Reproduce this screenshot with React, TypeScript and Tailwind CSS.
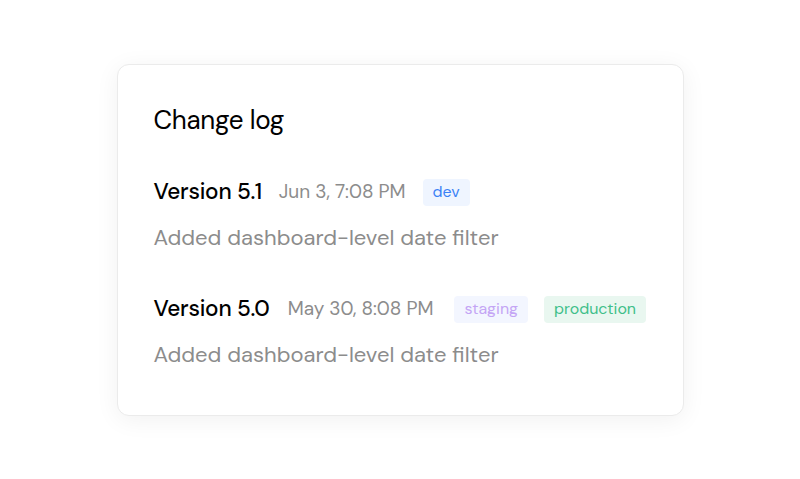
import React from "react";

const font = { fontFamily: '"DM Sans", Inter, "Noto Sans", sans-serif' };

function Badge({ label, cls }: { label: string; cls: string }) {
  return (
    <span className={`inline-flex items-center h-[27px] px-[10px] rounded-[4px] text-[16px] leading-none ${cls}`}>
      {label}
    </span>
  );
}

function Entry({
  version,
  date,
  badges,
  dateGap,
  badgeGap,
}: {
  version: string;
  date: string;
  badges: { label: string; cls: string }[];
  dateGap: string;
  badgeGap: string;
}) {
  return (
    <div className="flex flex-col gap-[12px]">
      <div className="flex items-center h-[34px]">
        <span className="text-[22.5px] font-medium text-black tracking-[-0.2px]">{version}</span>
        <span className={`${dateGap} text-[19px] text-[#8c8c8c]`}>{date}</span>
        <div className={`${badgeGap} flex gap-[16px]`}>
          {badges.map((b) => (
            <Badge key={b.label} {...b} />
          ))}
        </div>
      </div>
      <div className="text-[22px] leading-[33px] text-[#8c8c8c]">Added dashboard-level date filter</div>
    </div>
  );
}

export default function App() {
  return (
    <div className="w-[800px] h-[479px] bg-white flex items-start justify-center pt-[64px]" style={font}>
      <div className="w-[567px] rounded-[12px] border border-[#ebebeb] bg-white shadow-[0_4px_24px_rgba(0,0,0,0.06)] px-[36px] pt-[36px] pb-[44px] flex flex-col">
        <h1 className="text-[26px] leading-[39px] font-normal text-black tracking-[-0.3px]">Change log</h1>
        <div className="mt-[35px] flex flex-col gap-[38px]">
          <Entry
            version="Version 5.1"
            date="Jun 3, 7:08 PM"
            dateGap="ml-[17px]"
            badgeGap="ml-[17px]"
            badges={[{ label: "dev", cls: "bg-[#eff5ff] text-[#3b82f6]" }]}
          />
          <Entry
            version="Version 5.0"
            date="May 30, 8:08 PM"
            dateGap="ml-[18px]"
            badgeGap="ml-[21px]"
            badges={[
              { label: "staging", cls: "bg-[#f3f6ff] text-[#c4a5f5]" },
              { label: "production", cls: "bg-[#e9f7f0] text-[#3fbf8a]" },
            ]}
          />
        </div>
      </div>
    </div>
  );
}
